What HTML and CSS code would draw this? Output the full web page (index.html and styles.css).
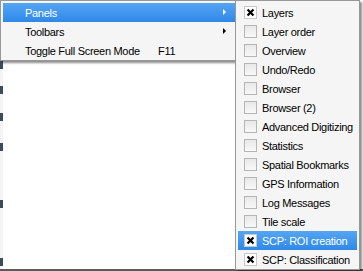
FILE: index.html
```html
<!DOCTYPE html>
<html>
<head>
<meta charset="utf-8">
<link rel="stylesheet" href="styles.css">
</head>
<body>
<div class="app">
  <div class="edge">
    <span class="mark m1"></span><span class="mark m2"></span><span class="mark m3"></span><span class="mark m4"></span><span class="mark m5"></span><span class="mark m6"></span>
  </div>
  <div class="bottomline"></div>
</div>

<div class="menu menu-main">
  <div class="item active"><span class="label">Panels</span><span class="arrow"></span></div>
  <div class="item"><span class="label">Toolbars</span><span class="arrow"></span></div>
  <div class="item"><span class="label">Toggle Full Screen Mode</span><span class="shortcut">F11</span></div>
</div>

<div class="menu menu-sub">
  <div class="item checked"><span class="box"><svg viewBox="0 0 13 13"><path d="M3 3 L10 10 M10 3 L3 10"/></svg></span><span class="label">Layers</span></div>
  <div class="item"><span class="box"></span><span class="label">Layer order</span></div>
  <div class="item"><span class="box"></span><span class="label">Overview</span></div>
  <div class="item"><span class="box"></span><span class="label">Undo/Redo</span></div>
  <div class="item"><span class="box"></span><span class="label">Browser</span></div>
  <div class="item"><span class="box"></span><span class="label">Browser (2)</span></div>
  <div class="item"><span class="box"></span><span class="label">Advanced Digitizing</span></div>
  <div class="item"><span class="box"></span><span class="label">Statistics</span></div>
  <div class="item"><span class="box"></span><span class="label">Spatial Bookmarks</span></div>
  <div class="item"><span class="box"></span><span class="label">GPS Information</span></div>
  <div class="item"><span class="box"></span><span class="label">Log Messages</span></div>
  <div class="item"><span class="box"></span><span class="label">Tile scale</span></div>
  <div class="item checked active"><span class="box"><svg viewBox="0 0 13 13"><path d="M3 3 L10 10 M10 3 L3 10"/></svg></span><span class="label">SCP: ROI creation</span></div>
  <div class="item checked"><span class="box"><svg viewBox="0 0 13 13"><path d="M3 3 L10 10 M10 3 L3 10"/></svg></span><span class="label">SCP: Classification</span></div>
</div>
</body>
</html>
```

FILE: styles.css
```css
html, body {
  margin: 0;
  padding: 0;
  width: 363px;
  height: 271px;
  overflow: hidden;
  background: #ffffff;
  font-family: "Liberation Sans", Arial, sans-serif;
  font-size: 11px;
  letter-spacing: -0.3px;
  color: #000;
}

.app {
  position: relative;
  width: 363px;
  height: 271px;
  display: flex;
  flex-direction: column;
}

.edge {
  width: 3px;
  flex: 1;
  background: #f4f4f4;
  position: relative;
}

.mark {
  position: absolute;
  left: 0;
  width: 3px;
  height: 8px;
  background: #3d4a5c;
}
.m1 { top: 61px; }
.m2 { top: 86px; }
.m3 { top: 113px; }
.m4 { top: 143px; }
.m5 { top: 200px; }
.m6 { top: 258px; }

.bottomline {
  height: 2px;
  background: #5a5a5a;
}

.menu {
  position: absolute;
  background: #f5f5f5;
  border: 1px solid #979797;
  box-shadow: 2px 2px 2px rgba(0, 0, 0, 0.45);
  display: flex;
  flex-direction: column;
}

.menu-main {
  left: 0;
  top: 0;
  width: 232px;
  padding: 2px 2px 0 2px;
}

.menu-sub {
  left: 235px;
  top: 0;
  width: 119px;
  padding: 2px 2px 0 2px;
}

.item {
  height: 19px;
  display: flex;
  align-items: center;
  position: relative;
  white-space: nowrap;
}

.item.active {
  background: linear-gradient(#55a5f4, #2f88e8);
  color: #fff;
}

.menu-main .label {
  margin-left: 22px;
  width: 133px;
}

.arrow {
  position: absolute;
  right: 9px;
  top: 6px;
  width: 0;
  height: 0;
  border-top: 3px solid transparent;
  border-bottom: 3px solid transparent;
  border-left: 3px solid #000;
}
.item.active .arrow {
  border-left-color: #fff;
}

.box {
  width: 11px;
  height: 11px;
  margin-left: 6px;
  margin-right: 5px;
  border: 1px solid #b5b5b5;
  background: linear-gradient(#e8e8e8, #f8f8f8);
  display: flex;
}

.item.checked .box {
  background: #ffffff;
  border-color: #c8c8c8;
}

.box svg {
  width: 11px;
  height: 11px;
}

.box path {
  stroke: #000;
  stroke-width: 2.6;
  fill: none;
}
```
